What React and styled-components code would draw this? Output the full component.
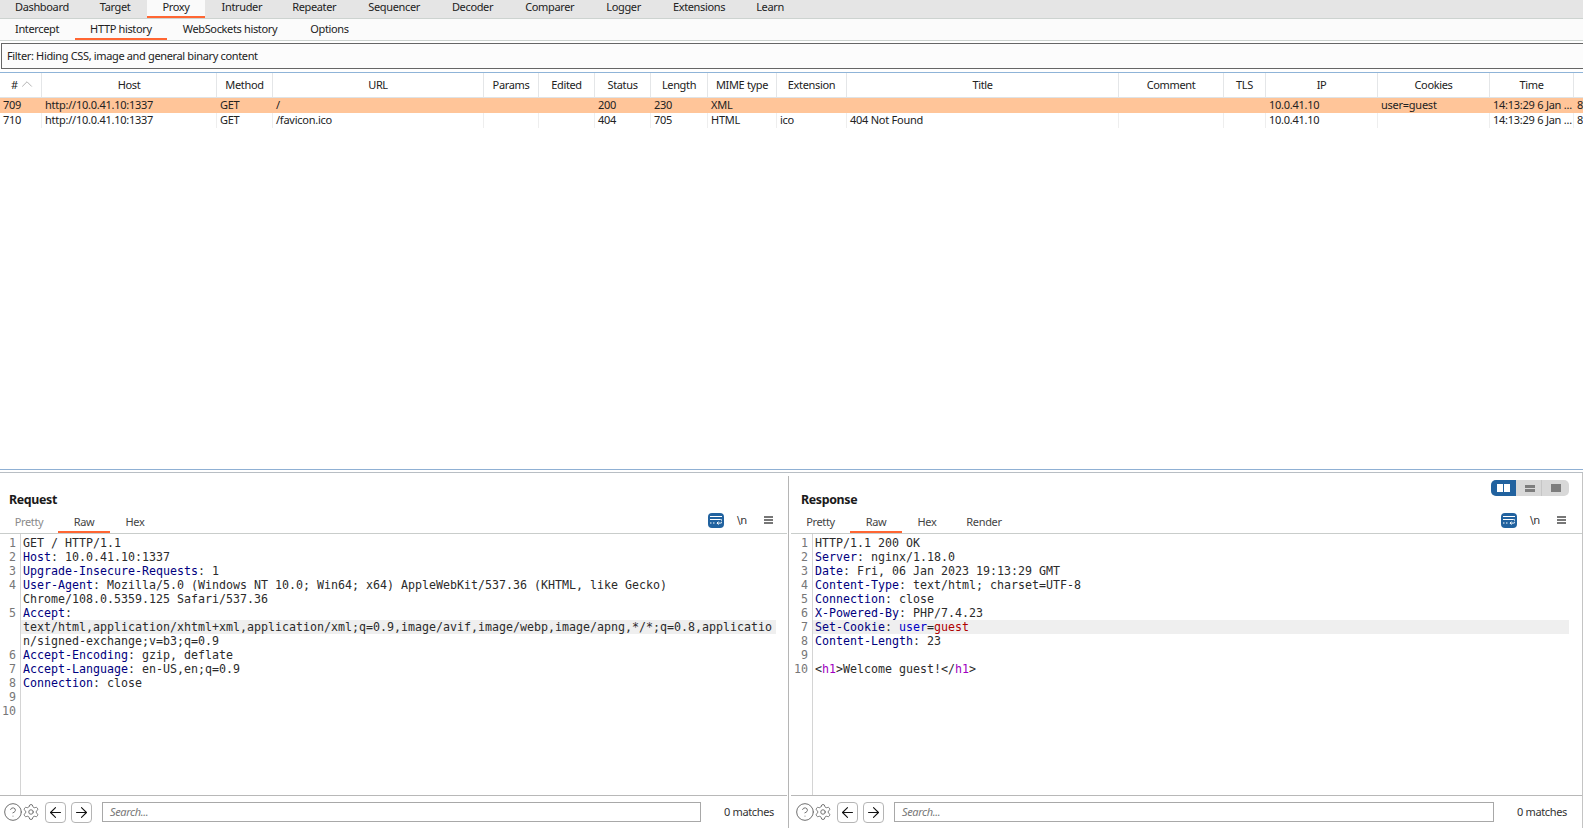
import React from 'react';
import styled, { createGlobalStyle } from 'styled-components';
import { ArrowLeft, ArrowRight, ChevronUp, CircleHelp, Settings } from 'lucide-react';

const Global = createGlobalStyle`
  html, body { margin: 0; padding: 0; background: #fff; overflow: hidden; }
  * { box-sizing: border-box; }
`;
const ui = `"Noto Sans", "Open Sans", sans-serif`;
const orange = '#ff6633';
const Page = styled.div`
  width: 1583px; height: 828px; display: flex; flex-direction: column;
  font: 11px ${ui}; letter-spacing: -0.35px; color: #222; overflow: hidden; background: #fff;
`;
const MainTabs = styled.div`
  height: 19px; flex: none; display: flex; background: #e5e5e5; border-bottom: 1px solid #cdd3d0;
`;
const MainTab = styled.div`
  height: 18px; padding: 0 15px; margin-right: ${p => p.$gap}px; line-height: 13px;
  border-bottom: 2px solid ${p => (p.$active ? orange : 'transparent')};
  background: ${p => (p.$active ? '#fafafa' : 'transparent')};
`;
const SubTabs = styled.div`
  height: 22px; flex: none; display: flex; background: #fbfbfb; border-bottom: 1px solid #cdd3d0;
`;
const SubTab = styled.div`
  height: 21px; padding: 0 15px; margin-right: ${p => p.$gap}px; line-height: 20px;
  border-bottom: 2px solid ${p => (p.$active ? orange : 'transparent')};
`;
const Filter = styled.div`
  flex: none; height: 26px; margin: 2px 0 3px 1px; padding-left: 5px; line-height: 24px;
  background: #fcfcfc; border: 1px solid #666; border-right: 0;
`;
const Table = styled.div`
  flex: 1; min-height: 0; border-top: 1px solid #8fb4d8;
`;
const cols = [42, 175, 56, 211, 55, 56, 56, 57, 69, 70, 272, 105, 42, 112, 112, 84, 9];
const gridCols = cols.map(c => `${c}px`).join(' ');
const HeadRow = styled.div`
  display: grid; grid-template-columns: ${gridCols}; height: 25px; background: #fff;
  border-bottom: 1px solid #dfe3e6;
`;
const HeadCell = styled.div`
  display: flex; align-items: center; justify-content: ${p => (p.$sort ? 'flex-start' : 'center')};
  padding: 0 0 2px ${p => (p.$sort ? 11 : 0)}px;
  border-right: 1px solid #e4e6e8; white-space: nowrap; overflow: hidden;
  &:last-child { border-right: 0; }
`;
const Row = styled.div`
  display: grid; grid-template-columns: ${gridCols}; height: 15px;
  line-height: ${p => (p.$sel ? 13 : 14)}px; letter-spacing: -0.25px;
  background: ${p => (p.$sel ? '#ffc599' : '#fff')};
`;
const Cell = styled.div`
  padding-left: 3px; white-space: nowrap; overflow: hidden;
  border-right: 1px solid ${p => (p.$sel ? 'transparent' : '#eeeeee')};
  &:last-child { border-right: 0; }
`;
const Splitter = styled.div`
  flex: none; height: 4px; border-top: 1px solid #8fb0d4; border-bottom: 1px solid #b8bec4;
  background: #fff;
`;
const Panes = styled.div`
  flex: none; height: 355px; display: flex; border-right: 1px solid #c4c4c4;
`;
const Pane = styled.div`
  display: flex; flex-direction: column; min-width: 0;
  width: ${p => p.$w}px; flex: none; margin-left: ${p => p.$ml || 0}px;
`;
const Divider = styled.div`
  flex: none; width: 1px; margin: 3px 0 0 1px; background: #b5b5b5;
`;
const Head = styled.div`
  flex: none; height: 37px; display: flex; justify-content: space-between; align-items: flex-start;
`;
const Title = styled.div`
  font-weight: 700; font-size: 12.4px; margin: 18px 0 0 ${p => p.$ml}px; line-height: 17px; color: #1a1a1a;
`;
const Toggle = styled.div`
  display: flex; height: 16px; width: 78px; margin: 7px 13px 0 0; border-radius: 5px; overflow: hidden;
  background: #d8d8d8;
`;
const Seg = styled.div`
  display: flex; align-items: center; justify-content: center; gap: 1px;
  flex-direction: ${p => (p.$col ? 'column' : 'row')};
  width: ${p => p.$w}px; background: ${p => (p.$on ? '#21629f' : 'transparent')};
  padding-left: ${p => (p.$sep ? 2 : 0)}px;
  border-right: ${p => (p.$sep ? '1px solid #c6c6c6' : '0')};
`;
const Block = styled.span`
  display: block; width: ${p => p.$w}px; height: ${p => p.$h}px; background: ${p => (p.$on ? '#fff' : '#7d7d7d')};
`;
const Tabs = styled.div`
  flex: none; height: 24px; display: flex; align-items: stretch; border-bottom: 1px solid #c9cdcb;
  padding-right: ${p => p.$pr}px; color: #444;
`;
const Tab = styled.div`
  width: ${p => p.$w}px; text-align: center; height: 23px; line-height: 24px;
  color: ${p => (p.$muted ? '#8a8a8a' : '#444')};
  border-bottom: 2px solid ${p => (p.$active ? orange : 'transparent')};
`;
const Spacer = styled.div` flex: 1; `;
const Tools = styled.div`
  display: flex; align-items: center; height: 20px; color: #333;
`;
const WrapBtn = styled.div`
  width: 16px; height: 15px; border-radius: 4px; background: #21629f; display: flex;
  align-items: center; justify-content: center;
`;
const Lf = styled.div`
  width: 36px; margin-right: 4px; text-align: center; font: 11px "DejaVu Sans", sans-serif; line-height: 15px;
`;
const Burger = styled.div`
  width: 9px; height: 8px;
  border-top: 2px solid #777; border-bottom: 2px solid #777; position: relative;
  &::after { content: ''; position: absolute; left: 0; right: 0; top: 1px; height: 2px; background: #777; }
`;
const Editor = styled.div`
  flex: 1; min-height: 0; padding-top: 2px; display: flex; flex-direction: column; overflow: hidden;
  font: 11.63px "DejaVu Sans Mono", monospace; letter-spacing: 0; color: #2b2b2b; position: relative;
`;
const Gutter = styled.div`
  position: absolute; left: ${p => p.$w}px; top: 0; bottom: 0; width: 1px; background: #d4d4d4;
`;
const Line = styled.div`
  display: flex; height: 14px; line-height: 14px; white-space: pre;
`;
const Num = styled.div`
  width: ${p => p.$w}px; flex: none; text-align: right; padding-right: 4px; color: #777;
`;
const Code = styled.div`
  flex: 1; padding-left: 2px; margin-left: 1px; margin-right: ${p => p.$mr}px;
  background: ${p => (p.$hl ? '#efefef' : 'transparent')};
`;
const K = styled.span` color: #000080; `;
const Blue = styled.span` color: #0000c8; `;
const Red = styled.span` color: #b00000; `;
const Tag = styled.span` color: #a000c0; `;
const Foot = styled.div`
  flex: none; height: 33px; display: flex; align-items: center; padding-left: ${p => p.$pl}px;
  border-top: 1px solid #b8b8b8; color: #707070;
`;
const IconSlot = styled.div`
  width: ${p => p.$w}px; display: flex; align-items: center; justify-content: center; flex: none;
  svg { flex: none; }
`;
const NavBtn = styled.div`
  width: 21px; height: 21px; margin-right: 5px; border: 1px solid #b5b5b5; border-radius: 4px; flex: none;
  display: flex; align-items: center; justify-content: center; background: #fff; color: #111;
`;
const Search = styled.div`
  width: ${p => p.$w}px; height: 20px; margin-left: 5px; border: 1px solid #a8a8a8; flex: none;
  padding-left: 7px; line-height: 18px; font-style: italic; color: #777;
`;
const Matches = styled.div`
  flex: 1; text-align: right; padding: 0 ${p => p.$pr}px 1px 0; color: #333; white-space: nowrap;
`;

const main = [['Dashboard', 1], ['Target', 2], ['Proxy', 2], ['Intruder', 0], ['Repeater', 2], ['Sequencer', 2], ['Decoder', 2], ['Comparer', 2], ['Logger', 2], ['Extensions', 1], ['Learn', 0]];
const heads = ['#', 'Host', 'Method', 'URL', 'Params', 'Edited', 'Status', 'Length', 'MIME type', 'Extension', 'Title', 'Comment', 'TLS', 'IP', 'Cookies', 'Time', ''];
const rows = [
  ['709', 'http://10.0.41.10:1337', 'GET', '/', '', '', '200', '230', 'XML', '', '', '', '', '10.0.41.10', 'user=guest', '14:13:29 6 Jan ...', '8'],
  ['710', 'http://10.0.41.10:1337', 'GET', '/favicon.ico', '', '', '404', '705', 'HTML', 'ico', '404 Not Found', '', '', '10.0.41.10', '', '14:13:29 6 Jan ...', '8'],
];
const reqLines = [
  ['1', 'GET / HTTP/1.1'],
  ['2', <><K>Host</K>: 10.0.41.10:1337</>],
  ['3', <><K>Upgrade-Insecure-Requests</K>: 1</>],
  ['4', <><K>User-Agent</K>: Mozilla/5.0 (Windows NT 10.0; Win64; x64) AppleWebKit/537.36 (KHTML, like Gecko)</>],
  ['', 'Chrome/108.0.5359.125 Safari/537.36'],
  ['5', <><K>Accept</K>:</>],
  ['', 'text/html,application/xhtml+xml,application/xml;q=0.9,image/avif,image/webp,image/apng,*/*;q=0.8,applicatio', true],
  ['', 'n/signed-exchange;v=b3;q=0.9'],
  ['6', <><K>Accept-Encoding</K>: gzip, deflate</>],
  ['7', <><K>Accept-Language</K>: en-US,en;q=0.9</>],
  ['8', <><K>Connection</K>: close</>],
  ['9', ''],
  ['10', ''],
];
const resLines = [
  ['1', 'HTTP/1.1 200 OK'],
  ['2', <><K>Server</K>: nginx/1.18.0</>],
  ['3', <><K>Date</K>: Fri, 06 Jan 2023 19:13:29 GMT</>],
  ['4', <><K>Content-Type</K>: text/html; charset=UTF-8</>],
  ['5', <><K>Connection</K>: close</>],
  ['6', <><K>X-Powered-By</K>: PHP/7.4.23</>],
  ['7', <><K>Set-Cookie</K>: <Blue>user</Blue>=<Red>guest</Red></>, true],
  ['8', <><K>Content-Length</K>: 23</>],
  ['9', ''],
  ['10', <>&lt;<Tag>h1</Tag>&gt;Welcome guest!&lt;/<Tag>h1</Tag>&gt;</>],
];

const WrapIcon = () => (
  <svg width="12" height="10" viewBox="0 0 12 10" fill="none" stroke="#fff" strokeWidth="1">
    <path d="M0 1.5h12M0 4.5h10.5a1.8 1.8 0 0 1 0 3.6H7M8.5 6.6 7 8.1l1.5 1.5M0 8h1.5M3 8h1.5" />
  </svg>
);

function PaneBody({ title, titleMl, tabs, lines, gutter, hlMr, pr, toggle, searchW, matchPr, footPl }) {
  return (
    <>
      <Head>
        <Title $ml={titleMl}>{title}</Title>
        {toggle && (
          <Toggle>
            <Seg $w={25} $on><Block $w={6} $h={8} $on /><Block $w={6} $h={8} $on /></Seg>
            <Seg $w={26} $sep $col><Block $w={10} $h={3} /><Block $w={10} $h={3} /></Seg>
            <Seg $w={27}><Block $w={10} $h={8} /></Seg>
          </Toggle>
        )}
      </Head>
      <Tabs $pr={pr}>
        {tabs.map(t => <Tab key={t.n} $w={t.w} $active={t.n === 'Raw'} $muted={t.n === 'Pretty' && title === 'Request'}>{t.n}</Tab>)}
        <Spacer />
        <Tools>
          <WrapBtn><WrapIcon /></WrapBtn>
          <Lf>\n</Lf>
          <Burger />
        </Tools>
      </Tabs>
      <Editor>
        <Gutter $w={gutter} />
        {lines.map((l, i) => (
          <Line key={i}>
            <Num $w={gutter}>{l[0]}</Num>
            <Code $hl={l[2]} $mr={hlMr}>{l[1]}</Code>
          </Line>
        ))}
      </Editor>
      <Foot $pl={footPl}>
        <IconSlot $w={17}><CircleHelp size={20} strokeWidth={1.2} /></IconSlot>
        <IconSlot $w={19}><Settings size={18} strokeWidth={1.3} /></IconSlot>
        <IconSlot $w={5} />
        <NavBtn><ArrowLeft size={17} strokeWidth={1.5} /></NavBtn>
        <NavBtn><ArrowRight size={17} strokeWidth={1.5} /></NavBtn>
        <Search $w={searchW}>Search...</Search>
        <Matches $pr={matchPr}>0 matches</Matches>
      </Foot>
    </>
  );
}

export default function App() {
  return (
    <Page>
      <Global />
      <MainTabs>
        {main.map(([n, g]) => <MainTab key={n} $gap={g} $active={n === 'Proxy'}>{n}</MainTab>)}
      </MainTabs>
      <SubTabs>
        <SubTab $gap={1}>Intercept</SubTab>
        <SubTab $gap={1} $active>HTTP history</SubTab>
        <SubTab $gap={3}>WebSockets history</SubTab>
        <SubTab $gap={0}>Options</SubTab>
      </SubTabs>
      <Filter>Filter: Hiding CSS, image and general binary content</Filter>
      <Table>
        <HeadRow>
          {heads.map((h, i) => (
            <HeadCell key={i} $sort={i === 0}>{h}{i === 0 && <ChevronUp size={18} strokeWidth={1} color="#999" />}</HeadCell>
          ))}
        </HeadRow>
        {rows.map((r, i) => (
          <Row key={r[0]} $sel={i === 0}>
            {r.map((c, j) => <Cell key={j} $sel={i === 0}>{c}</Cell>)}
          </Row>
        ))}
      </Table>
      <Splitter />
      <Panes>
        <Pane $w={787}>
          <PaneBody
            title="Request" titleMl={9} gutter={20} hlMr={11} pr={14} searchW={599} matchPr={13} footPl={4}
            tabs={[{ n: 'Pretty', w: 58 }, { n: 'Raw', w: 52 }, { n: 'Hex', w: 50 }]}
            lines={reqLines}
          />
        </Pane>
        <Divider />
        <Pane $w={791} $ml={2}>
          <PaneBody
            title="Response" titleMl={10} gutter={21} hlMr={13} pr={16} toggle searchW={600} matchPr={15} footPl={5}
            tabs={[{ n: 'Pretty', w: 59 }, { n: 'Raw', w: 52 }, { n: 'Hex', w: 50 }, { n: 'Render', w: 64 }]}
            lines={resLines}
          />
        </Pane>
      </Panes>
    </Page>
  );
}
